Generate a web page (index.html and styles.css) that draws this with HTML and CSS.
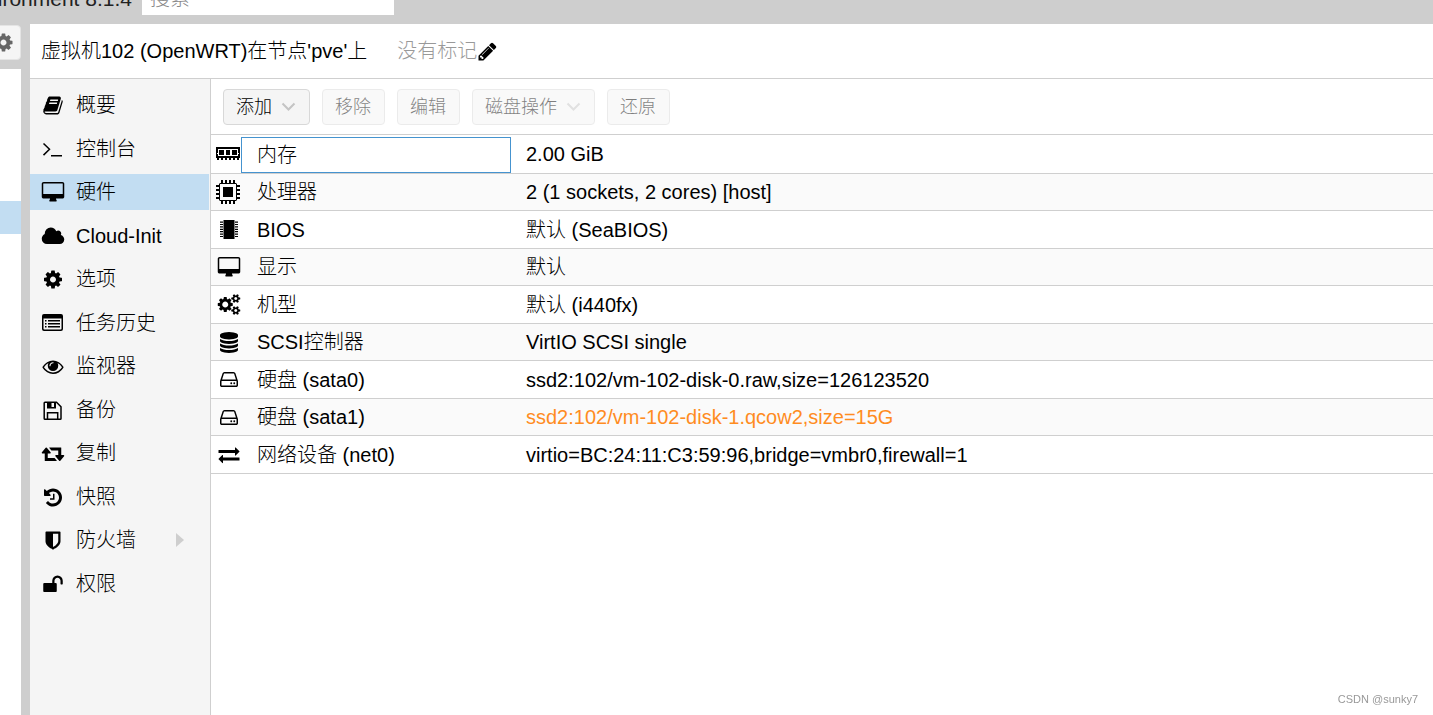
FILE: index.html
```
<!DOCTYPE html>
<html lang="zh-CN">

<head>
  <meta charset="UTF-8">
  <meta name="viewport" content="width=device-width, initial-scale=1.0">
  <title>pve - Proxmox Virtual Environment</title>
  <link rel="stylesheet" href="styles.css">
</head>

<body>
  <svg class="sprite" aria-hidden="true">
    <symbol id="i-cog" viewBox="0 0 1792 1792"><path d="M1152 896q0-106-75-181t-181-75-181 75-75 181 75 181 181 75 181-75 75-181zm512-109v222q0 12-8 23t-20 13l-185 28q-19 54-39 91 35 50 107 138 10 12 10 25t-9 23q-27 37-99 108t-94 71q-12 0-26-9l-138-108q-44 23-91 38-16 136-29 186-7 28-36 28h-222q-14 0-24.5-8.5t-11.5-21.5l-28-184q-49-16-90-37l-141 107q-10 9-25 9-14 0-25-11-126-114-165-168-7-10-7-23 0-12 8-23 15-21 51-66.5t54-70.5q-27-50-41-99l-183-27q-13-2-21-12.5t-8-23.5v-222q0-12 8-23t19-13l186-28q14-46 39-92-40-57-107-138-10-12-10-24 0-10 9-23 26-36 98.5-107.5t94.5-71.5q13 0 26 10l138 107q44-23 91-38 16-136 29-186 7-28 36-28h222q14 0 24.5 8.5t11.5 21.5l28 184q49 16 90 37l142-107q9-9 24-9 13 0 25 10 129 119 165 170 7 8 7 22 0 12-8 23-15 21-51 66.5t-54 70.5q26 50 41 98l183 28q13 2 21 12.5t8 23.5z"/></symbol>
    <symbol id="i-cogs" viewBox="-64 0 2048 1792"><path d="M896 896q0-106-75-181t-181-75-181 75-75 181 75 181 181 75 181-75 75-181zm768 512q0-52-38-90t-90-38-90 38-38 90q0 53 37.5 90.5t90.5 37.5 90.5-37.5 37.5-90.5zm0-1024q0-52-38-90t-90-38-90 38-38 90q0 53 37.5 90.5t90.5 37.5 90.5-37.5 37.5-90.5zm-384 421v185q0 10-7 19.5t-16 10.5l-155 24q-11 35-32 76 34 48 90 115 7 11 7 20 0 12-7 19-23 30-82.500 89.500t-78.500 59.500q-11 0-21-7l-115-90q-37 19-77 31-11 108-23 155-7 24-30 24h-186q-11 0-20-7.500t-10-17.500l-23-153q-34-10-75-31l-118 89q-7 7-20 7-11 0-21-8-144-133-144-160 0-9 7-19 10-14 41-53t47-61q-23-44-35-82l-152-24q-10-1-17-9.500t-7-19.500v-185q0-10 7-19.500t16-10.500l155-24q11-35 32-76-34-48-90-115-7-11-7-20 0-12 7-20 22-30 82-89t79-59q11 0 21 7l115 90q34-18 77-32 11-108 23-154 7-24 30-24h186q11 0 20 7.500t10 17.500l23 153q34 10 75 31l118-89q8-7 20-7 11 0 21 8 144 133 144 160 0 8-7 19-12 16-42 54t-45 60q23 48 34 82l152 23q10 2 17 10.500t7 19.500zm640 533v140q0 16-149 31-12 27-30 52 51 113 51 138 0 4-4 7-122 71-124 71-8 0-46-47t-52-68q-20 2-30 2t-30-2q-14 21-52 68t-46 47q-2 0-124-71-4-3-4-7 0-25 51-138-18-25-30-52-149-15-149-31v-140q0-16 149-31 13-29 30-52-51-113-51-138 0-4 4-7 4-2 35-20t59-34 30-16q8 0 46 46.500t52 67.500q20-2 30-2t30 2q51-71 92-112l6-2q4 0 124 70 4 3 4 7 0 25-51 138 17 23 30 52 149 15 149 31zm0-1024v140q0 16-149 31-12 27-30 52 51 113 51 138 0 4-4 7-122 71-124 71-8 0-46-47t-52-68q-20 2-30 2t-30-2q-14 21-52 68t-46 47q-2 0-124-71-4-3-4-7 0-25 51-138-18-25-30-52-149-15-149-31v-140q0-16 149-31 13-29 30-52-51-113-51-138 0-4 4-7 4-2 35-20t59-34 30-16q8 0 46 46.500t52 67.500q20-2 30-2t30 2q51-71 92-112l6-2q4 0 124 70 4 3 4 7 0 25-51 138 17 23 30 52 149 15 149 31z"/></symbol>
    <symbol id="i-pencil" viewBox="0 0 1792 1792"><path d="M491 1536l91-91-235-235-91 91v107h128v128h107zm523-928q0-22-22-22-10 0-17 7l-542 542q-7 7-7 17 0 22 22 22 10 0 17-7l542-542q7-7 7-17zm-54-192l416 416-832 832h-416v-416zm683 96q0 53-37 90l-166 166-416-416 166-165q36-38 90-38 53 0 91 38l235 234q37 39 37 91z"/></symbol>
    <symbol id="i-book" viewBox="0 0 1792 1792"><path d="M1703 478q40 57 18 129l-275 906q-19 64-76.5 107.5t-122.5 43.5h-923q-77 0-148.5-53.5t-99.5-131.5q-24-67-2-127 0-4 3-27t4-37q1-8-3-21.5t-3-19.5q2-11 8-21t16.5-23.5 16.5-23.5q23-38 45-91.5t30-91.5q3-10 .5-30t-.5-28q3-11 17-28t17-23q21-36 42-92t25-90q1-9-2.5-32t.5-28q4-13 22-30.5t22-22.5q19-26 42.5-84.5t27.5-96.5q1-8-3-25.5t-2-26.5q2-8 9-18t18-23 17-21q8-12 16.5-30.5t15-35 16-36 19.5-32 26.5-23.5 36-11.5 47.5 5.5l-1 3q38-9 51-9h761q74 0 114 56t18 130l-274 906q-36 119-71.5 153.5t-128.5 34.5h-869q-27 0-38 15-11 16-1 43 24 70 144 70h923q29 0 56-15.5t35-41.5l300-987q7-22 5-57 38 15 59 43zm-1064 2q-4 13 2 22.5t20 9.5h608q13 0 25.5-9.5t16.5-22.5l21-64q4-13-2-22.5t-20-9.5h-608q-13 0-25.5 9.5t-16.5 22.5zm-83 256q-4 13 2 22.5t20 9.5h608q13 0 25.5-9.5t16.5-22.5l21-64q4-13-2-22.5t-20-9.5h-608q-13 0-25.5 9.5t-16.5 22.5z"/></symbol>
    <symbol id="i-terminal" viewBox="0 0 24 21"><path d="M2.5 4.5l6 5.8-6 5.8M10 16.7h11" fill="none" stroke="currentColor" stroke-width="1.5"/></symbol>
    <symbol id="i-desktop" viewBox="0 0 2048 1792"><path d="M1856 992v-832q0-13-9.5-22.5t-22.5-9.5h-1600q-13 0-22.5 9.5t-9.5 22.5v832q0 13 9.5 22.5t22.5 9.5h1600q13 0 22.5-9.5t9.5-22.5zm128-832v1088q0 66-47 113t-113 47h-544q0 37 16 77.5t32 71 16 43.5q0 26-19 45t-45 19h-512q-26 0-45-19t-19-45q0-14 16-44t32-70 16-78h-544q-66 0-113-47t-47-113v-1088q0-66 47-113t113-47h1600q66 0 113 47t47 113z"/></symbol>
    <symbol id="i-cloud" viewBox="0 0 2048 1792"><path d="M1984 1152q0 159-112.5 271.5t-271.5 112.5h-1088q-185 0-316.5-131.5t-131.5-316.5q0-132 71-241.5t187-163.5q-2-28-2-43 0-212 150-362t362-150q158 0 286.5 88t187.5 230q70-62 166-62 106 0 181 75t75 181q0 75-41 138 129 30 213 134.5t84 239.5z"/></symbol>
    <symbol id="i-list" viewBox="0 0 24 21"><path fill-rule="evenodd" d="M3 1h17q2 0 2 2v13q0 2-2 2H3q-2 0-2-2V3q0-2 2-2zM2.5 5.5v10.2q0 .8.8.8h16.4q.8 0 .8-.8V5.5z"/><path d="M4 7h1.5v1.4H4zM7 7h12v1.4H7zM4 10h1.5v1.4H4zM7 10h12v1.4H7zM4 13h1.5v1.4H4zM7 13h12v1.4H7z"/></symbol>
    <symbol id="i-eye" viewBox="0 0 1792 1792"><path d="M1664 960q-152-236-381-353 61 104 61 225 0 185-131.5 316.5t-316.5 131.5-316.5-131.5-131.5-316.5q0-121 61-225-229 117-381 353 133 205 333.5 326.5t434.5 121.5 434.5-121.5 333.5-326.5zm-720-384q0-20-14-34t-34-14q-125 0-214.5 89.5t-89.5 214.5q0 20 14 34t34 14 34-14 14-34q0-86 61-147t147-61q20 0 34-14t14-34zm848 384q0 34-20 69-140 230-376.5 368.5t-499.5 138.5-499.5-139-376.5-368q-20-35-20-69t20-69q140-229 376.5-368t499.5-139 499.5 139 376.5 368q20 35 20 69z"/></symbol>
    <symbol id="i-floppy" viewBox="0 0 24 21"><path d="M3.2 3q0-.8.8-.8h11.5L20 6.700V18.500q0 .8-.8.8H4q-.8 0-.8-.8zM6.500 19v-6.300h10.200V19" fill="none" stroke="currentColor" stroke-width="1.500"/><path fill-rule="evenodd" d="M6 2h9v6.500H6zM10.500 3v4h2.500V3z"/></symbol>
    <symbol id="i-retweet" viewBox="-64 0 2048 1792"><path d="M1280 1504q0 13-9.500 22.500t-22.500 9.500h-960q-8 0-13.500-2t-9-7-5.500-8-3-11.500-1-11.500v-600h-192q-26 0-45-19t-19-45q0-24 15-41l320-384q19-22 49-22t49 22l320 384q15 17 15 41 0 26-19 45t-45 19h-192v384h576q16 0 25 11l160 192q7 10 7 21zm640-416q0 24-15 41l-320 384q-20 23-49 23t-49-23l-320-384q-15-17-15-41 0-26 19-45t45-19h192v-384h-576q-16 0-25-12l-160-192q-7-9-7-20 0-13 9.500-22.500t22.500-9.500h960q8 0 13.500 2t9 7 5.500 8 3 11.500 1 11.500v600h192q26 0 45 19t19 45z"/></symbol>
    <symbol id="i-history" viewBox="0 0 1792 1792"><path d="M1664 896q0 156-61 298t-164 245-245 164-298 61q-172 0-327-72.500t-264-204.500q-7-10-6.500-22.500t8.500-20.500l137-138q10-9 25-9 16 2 23 12 73 95 179 147t225 52q104 0 198.500-40.500t163.500-109.500 109.500-163.500 40.500-198.500-40.500-198.500-109.500-163.500-163.500-109.500-198.500-40.500q-98 0-188 35.500t-160 101.500l137 138q31 30 14 69-17 40-59 40h-448q-26 0-45-19t-19-45v-448q0-42 40-59 39-17 69 14l130 129q107-101 244.500-156.500t284.500-55.500q156 0 298 61t245 164 164 245 61 298zm-640-288v448q0 14-9 23t-23 9h-320q-14 0-23-9t-9-23v-64q0-14 9-23t23-9h224v-352q0-14 9-23t23-9h64q14 0 23 9t9 23z"/></symbol>
    <symbol id="i-shield" viewBox="0 0 1792 1792"><path d="M1344 960v-640h-448v1137q119-63 213-137 235-184 235-360zm192-768v768q0 86-33.500 170.500t-83 150-118 127.500-126.500 103-121 77.500-89.500 49.500-42.500 20q-12 6-26 6t-26-6q-16-7-42.500-20t-89.500-49.500-121-77.500-126.500-103-118-127.500-83-150-33.500-170.500v-768q0-26 19-45t45-19h1152q26 0 45 19t19 45z"/></symbol>
    <symbol id="i-unlock" viewBox="0 0 1792 1792"><path d="M1728 576v256q0 26-19 45t-45 19h-64q-26 0-45-19t-19-45v-256q0-106-75-181t-181-75-181 75-75 181v192h96q40 0 68 28t28 68v576q0 40-28 68t-68 28h-960q-40 0-68-28t-28-68v-576q0-40 28-68t68-28h672v-192q0-185 131.500-316.500t316.500-131.500 316.500 131.500 131.500 316.500z"/></symbol>
    <symbol id="i-memory" viewBox="0 0 24 14"><path fill-rule="evenodd" d="M0 0h24v11H0zM2 2v4H1v1h1v2h20V7h1V6h-1V2z"/><path d="M3 3h5v5H3zM10 3h4v5h-4zM16 3h5v5h-5zM1 11h2v2H1zM5 11h2v2H5zM9 11h2v2H9zM13 11h2v2h-2zM17 11h2v2h-2zM21 11h2v2h-2z"/></symbol>
    <symbol id="i-cpu" viewBox="0 0 24 24"><path fill-rule="evenodd" d="M4 3h16l1 1v16l-1 1H4l-1-1V4zM4 4v16h16V4z"/><path d="M7 7h10v10H7zM5 0h2v3H5zM9 0h2v3H9zM13 0h2v3h-2zM17 0h2v3h-2zM5 21h2v3H5zM9 21h2v3H9zM13 21h2v3h-2zM17 21h2v3h-2zM0 5h3v2H0zM0 9h3v2H0zM0 13h3v2H0zM0 17h3v2H0zM21 5h3v2h-3zM21 9h3v2h-3zM21 13h3v2h-3zM21 17h3v2h-3z"/></symbol>
    <symbol id="i-chip" viewBox="0 0 24 21"><path d="M6.500 1h11v19h-11z"/><path d="M4.500 2.500v16M19.500 2.500v16" stroke="currentColor" stroke-width="3" stroke-dasharray="1.200 1.200"/></symbol>
    <symbol id="i-database" viewBox="0 0 1792 1792"><path d="M896 768q237 0 443-43t325-127v170q0 69-103 128t-280 93.500-385 34.500-385-34.500-280-93.500-103-128v-170q119 84 325 127t443 43zm0 768q237 0 443-43t325-127v170q0 69-103 128t-280 93.500-385 34.500-385-34.500-280-93.500-103-128v-170q119 84 325 127t443 43zm0-384q237 0 443-43t325-127v170q0 69-103 128t-280 93.500-385 34.500-385-34.500-280-93.500-103-128v-170q119 84 325 127t443 43zm0-1152q208 0 385 34.500t280 93.500 103 128v128q0 69-103 128t-280 93.500-385 34.500-385-34.500-280-93.500-103-128v-128q0-69 103-128t280-93.500 385-34.500z"/></symbol>
    <symbol id="i-hdd" viewBox="0 0 1792 1792"><path d="M1168 1216q0 33-23.500 56.500t-56.500 23.500-56.500-23.500-23.500-56.500 23.500-56.500 56.500-23.500 56.500 23.500 23.500 56.500zm256 0q0 33-23.500 56.500t-56.500 23.500-56.500-23.500-23.500-56.500 23.500-56.500 56.500-23.500 56.500 23.500 23.500 56.500zm112 160v-320q0-13-9.500-22.500t-22.500-9.500h-1216q-13 0-22.500 9.500t-9.500 22.500v320q0 13 9.500 22.500t22.500 9.500h1216q13 0 22.500-9.500t9.500-22.500zm-1230-480h1180l-157-482q-4-13-16-21.500t-26-8.500h-782q-14 0-26 8.500t-16 21.500zm1358 160v320q0 66-47 113t-113 47h-1216q-66 0-113-47t-47-113v-320q0-25 16-75l197-606q17-53 63-86t101-33h782q55 0 101 33t63 86l197 606q16 50 16 75z"/></symbol>
    <symbol id="i-exchange" viewBox="0 0 1792 1792"><path d="M1792 1184v192q0 13-9.500 22.500t-22.500 9.500h-1376v192q0 13-9.500 22.500t-22.500 9.500q-12 0-24-10l-319-320q-9-9-9-22 0-14 9-23l320-320q9-9 23-9 13 0 22.500 9.500t9.500 22.500v192h1376q13 0 22.500 9.500t9.500 22.500zm0-544q0 14-9 23l-320 320q-9 9-23 9-13 0-22.500-9.500t-9.500-22.500v-192h-1376q-13 0-22.500-9.500t-9.500-22.500v-192q0-13 9.500-22.500t22.500-9.500h1376v-192q0-14 9-23t23-9q12 0 24 10l319 319q9 9 9 23z"/></symbol>
    <symbol id="i-down" viewBox="0 0 15 10"><path d="M1.500 1.500l6 6 6-6" fill="none" stroke="currentColor" stroke-width="2"/></symbol>
  </svg>

  <header class="topbar">
    <div class="brand">Environment 8.1.4</div>
    <input class="search" type="text" placeholder="搜索" aria-label="搜索">
  </header>

  <div class="workspace">
    <aside class="tree">
      <div class="tree-tools">
        <button class="tree-btn" type="button" aria-label="设置"><svg><use href="#i-cog"/></svg></button>
      </div>
      <div class="tree-body">
        <div class="tree-selected"></div>
      </div>
    </aside>

    <main class="panel">
      <div class="panel-title">
        <h1>虚拟机102 (OpenWRT)在节点'pve'上</h1>
        <div class="tags">没有标记<button type="button" aria-label="编辑标记"><svg><use href="#i-pencil"/></svg></button></div>
      </div>

      <div class="panel-body">
        <nav class="side">
          <ul>
            <li><a href="#"><svg><use href="#i-book"/></svg>概要</a></li>
            <li><a href="#"><svg><use href="#i-terminal"/></svg>控制台</a></li>
            <li><a class="active" href="#"><svg><use href="#i-desktop"/></svg>硬件</a></li>
            <li><a href="#"><svg><use href="#i-cloud"/></svg>Cloud-Init</a></li>
            <li><a href="#"><svg><use href="#i-cog"/></svg>选项</a></li>
            <li><a href="#"><svg><use href="#i-list"/></svg>任务历史</a></li>
            <li><a href="#"><svg><use href="#i-eye"/></svg>监视器</a></li>
            <li><a href="#"><svg><use href="#i-floppy"/></svg>备份</a></li>
            <li><a href="#"><svg><use href="#i-retweet"/></svg>复制</a></li>
            <li><a href="#"><svg><use href="#i-history"/></svg>快照</a></li>
            <li><a class="has-sub" href="#"><svg><use href="#i-shield"/></svg>防火墙</a></li>
            <li><a href="#"><svg><use href="#i-unlock"/></svg>权限</a></li>
          </ul>
        </nav>

        <section class="hardware">
          <div class="toolbar">
            <button class="btn" type="button">添加<svg><use href="#i-down"/></svg></button>
            <button class="btn" type="button" disabled>移除</button>
            <button class="btn" type="button" disabled>编辑</button>
            <button class="btn" type="button" disabled>磁盘操作<svg><use href="#i-down"/></svg></button>
            <button class="btn" type="button" disabled>还原</button>
          </div>

          <table class="hw-table">
            <tbody>
              <tr>
                <td class="hw-icon big"><svg><use href="#i-memory"/></svg></td>
                <th class="focused" scope="row"><span>内存</span></th>
                <td>2.00 GiB</td>
              </tr>
              <tr>
                <td class="hw-icon big"><svg><use href="#i-cpu"/></svg></td>
                <th scope="row">处理器</th>
                <td>2 (1 sockets, 2 cores) [host]</td>
              </tr>
              <tr>
                <td class="hw-icon"><svg><use href="#i-chip"/></svg></td>
                <th scope="row">BIOS</th>
                <td>默认 (SeaBIOS)</td>
              </tr>
              <tr>
                <td class="hw-icon"><svg><use href="#i-desktop"/></svg></td>
                <th scope="row">显示</th>
                <td>默认</td>
              </tr>
              <tr>
                <td class="hw-icon"><svg><use href="#i-cogs"/></svg></td>
                <th scope="row">机型</th>
                <td>默认 (i440fx)</td>
              </tr>
              <tr>
                <td class="hw-icon"><svg><use href="#i-database"/></svg></td>
                <th scope="row">SCSI控制器</th>
                <td>VirtIO SCSI single</td>
              </tr>
              <tr>
                <td class="hw-icon"><svg><use href="#i-hdd"/></svg></td>
                <th scope="row">硬盘 (sata0)</th>
                <td>ssd2:102/vm-102-disk-0.raw,size=126123520</td>
              </tr>
              <tr>
                <td class="hw-icon"><svg><use href="#i-hdd"/></svg></td>
                <th scope="row">硬盘 (sata1)</th>
                <td class="pending">ssd2:102/vm-102-disk-1.qcow2,size=15G</td>
              </tr>
              <tr>
                <td class="hw-icon"><svg><use href="#i-exchange"/></svg></td>
                <th scope="row">网络设备 (net0)</th>
                <td>virtio=BC:24:11:C3:59:96,bridge=vmbr0,firewall=1</td>
              </tr>
            </tbody>
          </table>
        </section>
      </div>
    </main>
  </div>

  <div class="watermark">CSDN @sunky7</div>
</body>

</html>
```
FILE: styles.css
```
* {
  box-sizing: border-box;
}

body {
  display: flex;
  flex-direction: column;
  height: 100vh;
  margin: 0;
  overflow: hidden;
  font-family: "Liberation Sans", "Noto Sans CJK SC", sans-serif;
  font-size: 20px;
  font-weight: 300;
  line-height: 24px;
  color: #000;
  background-color: #cecece;
}

svg {
  display: block;
  flex: none;
  fill: currentColor;
}

button,
input {
  font: inherit;
  color: inherit;
}

.sprite {
  position: absolute;
  width: 0;
  height: 0;
}

/* top bar */
.topbar {
  display: flex;
  flex: none;
  align-items: flex-end;
  gap: 10px;
  height: 24px;
  padding-bottom: 9px;
  overflow: hidden;
}

.brand {
  display: flex;
  justify-content: flex-end;
  width: 132px;
  font-size: 21px;
  line-height: 32px;
  color: #222;
  white-space: nowrap;
}

.search {
  width: 252px;
  height: 36px;
  padding: 4px 8px 0;
  border: none;
  background-color: #fff;
}

.search::placeholder {
  color: #888;
}

.workspace {
  display: flex;
  flex: 1;
  gap: 9px;
  min-height: 0;
}

/* resource tree */
.tree {
  display: flex;
  flex-direction: column;
  width: 21px;
  overflow: hidden;
}

.tree-tools {
  display: flex;
  justify-content: flex-end;
  padding: 1px 0 9px;
}

.tree-btn {
  display: flex;
  flex: none;
  align-items: center;
  justify-content: center;
  width: 35px;
  height: 35px;
  padding: 0;
  border: 1px solid #e4e4e4;
  border-radius: 4px;
  color: #666;
  background-color: #f5f5f5;
}

.tree-btn svg {
  width: 21px;
  height: 21px;
}

.tree-body {
  flex: 1;
  padding-top: 132px;
  background-color: #fff;
}

.tree-selected {
  height: 33px;
  background-color: #c2ddf2;
}

/* content panel */
.panel {
  display: flex;
  flex: 1;
  flex-direction: column;
  min-width: 0;
  background-color: #fff;
}

.panel-title {
  display: flex;
  align-items: center;
  gap: 30px;
  height: 55px;
  padding-left: 11px;
  border-bottom: 1px solid #cfcfcf;
}

.panel-title h1 {
  margin: 0;
  font-size: 20px;
  font-weight: 300;
}

.tags {
  display: flex;
  align-items: center;
  color: #999;
}

.tags button {
  padding: 0;
  border: none;
  color: #000;
  background: none;
}

.tags svg {
  width: 21px;
  height: 21px;
}

.panel-body {
  display: flex;
  flex: 1;
  min-height: 0;
}

.side {
  flex: none;
  width: 181px;
  padding: 8px 1px 0 0;
  border-right: 1px solid #cfcfcf;
  background-color: #f5f5f5;
}

.side ul {
  margin: 0;
  padding: 0;
  list-style: none;
}

.side li {
  margin-bottom: 7px;
}

.side li:nth-child(odd) {
  margin-bottom: 8px;
}

.side a {
  display: flex;
  align-items: center;
  gap: 11px;
  height: 36px;
  padding-left: 11px;
  color: #000;
  text-decoration: none;
}

.side a.active {
  background-color: #c2ddf2;
}

.side svg {
  width: 24px;
  height: 21px;
}

.side .has-sub::after {
  content: "";
  margin: 0 25px 0 auto;
  border: 7px solid transparent;
  border-left: 8px solid #cecece;
  border-right: none;
}

.hardware {
  flex: 1;
  min-width: 0;
}

.toolbar {
  display: flex;
  gap: 12px;
  padding: 10px 12px 9px;
  border-bottom: 1px solid #cfcfcf;
}

.btn {
  display: flex;
  align-items: center;
  gap: 9px;
  height: 36px;
  padding: 0 13px 0 12px;
  border: 1px solid #d8d8d8;
  border-radius: 4px;
  font-size: 18px;
  background-color: #f5f5f5;
}

.btn:disabled {
  opacity: 0.5;
}

.btn svg {
  width: 15px;
  height: 10px;
  color: #c4c4c4;
}

/* hardware list */
.hw-table {
  width: 100%;
  border-spacing: 0;
  table-layout: fixed;
}

.hw-table td,
.hw-table th {
  height: 37px;
  padding: 0 15px;
  border-bottom: 1px solid #cfcfcf;
  font-weight: 300;
  text-align: left;
  white-space: nowrap;
}

.hw-table tr:nth-child(odd) > * {
  height: 38px;
}

.hw-table tr:nth-child(even) {
  background-color: #fafafa;
}

.hw-table th {
  width: 270px;
  padding-left: 16px;
}

.hw-table td.hw-icon {
  width: 30px;
  padding: 0 0 0 5px;
}

.hw-icon svg {
  width: 26px;
  height: 21px;
}

.hw-icon.big svg {
  width: 24px;
  height: 24px;
}

.hw-table th.focused {
  padding: 2px 0 0;
}

.focused span {
  display: block;
  height: 36px;
  padding-left: 15px;
  border: 1px solid #4593cf;
  line-height: 34px;
}

.hw-table .pending {
  color: #ff8c1f;
}

.watermark {
  position: fixed;
  right: 15px;
  bottom: 8px;
  font-size: 11px;
  line-height: 16px;
  color: #999;
}
```
